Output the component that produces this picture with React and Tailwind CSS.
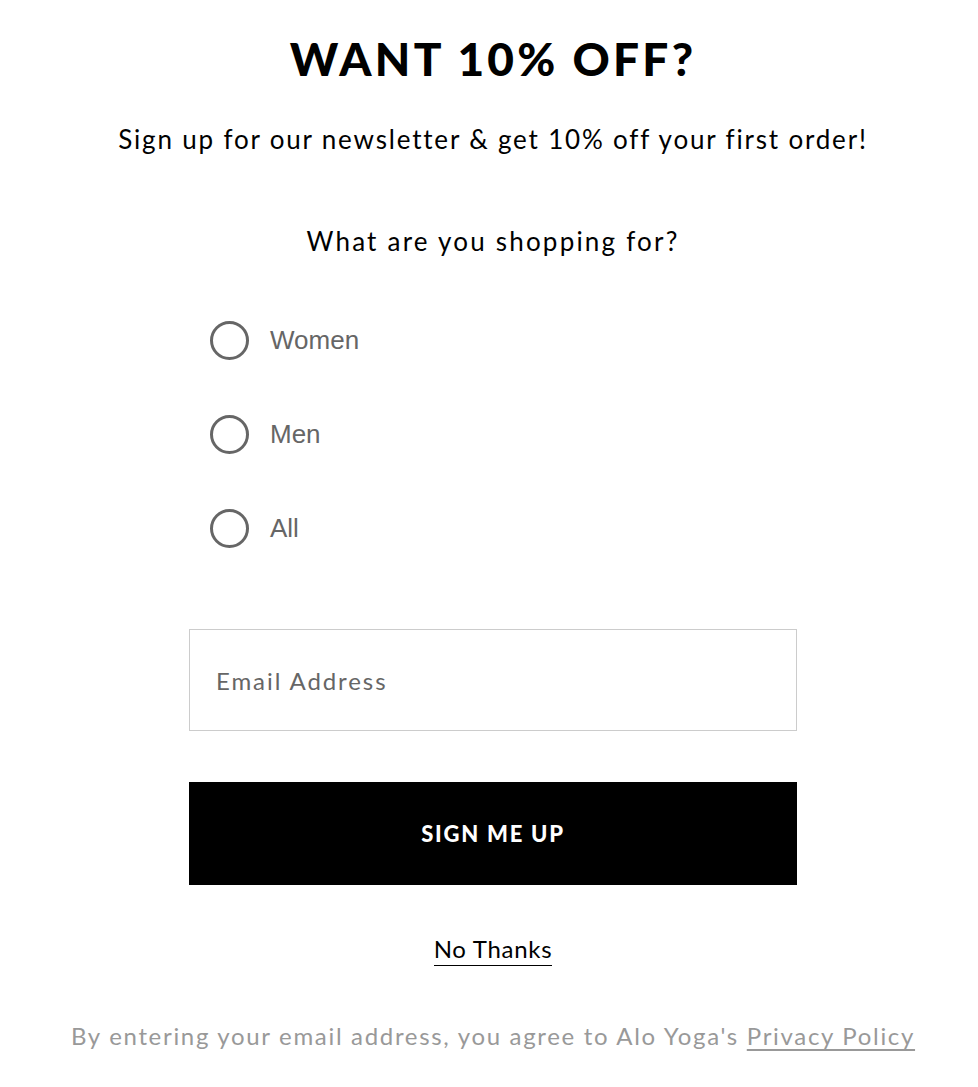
import { useState } from "react";

const options = ["Women", "Men", "All"];

const App = () => {
  const [choice, setChoice] = useState(null);
  const [email, setEmail] = useState("");

  return (
    <div className="min-h-screen w-full bg-white flex flex-col items-center pl-[8px] font-['Lato',sans-serif] text-black">
      <h1 className="mt-[34px] text-[46px] leading-[50px] font-black tracking-[0.07em] font-['Lato',sans-serif]">
        WANT 10% OFF?
      </h1>
      <p className="mt-[40px] text-[26px] leading-[30px] tracking-[0.07em]">
        Sign up for our newsletter &amp; get 10% off your first order!
      </p>
      <p className="mt-[72px] text-[26px] leading-[30px] tracking-[0.085em]">
        What are you shopping for?
      </p>

      <div className="mt-[65px] w-[608px] flex flex-col gap-[56px] pl-[21px]">
        {options.map((opt) => (
          <label
            key={opt}
            className="flex items-center gap-[21px] h-[38px] cursor-pointer"
            onClick={() => setChoice(opt)}
          >
            <span className="w-[39px] h-[39px] rounded-full border-[3px] border-[#666] flex items-center justify-center">
              {choice === opt && (
                <span className="w-[21px] h-[21px] rounded-full bg-[#666]" />
              )}
            </span>
            <span className="text-[26px] text-[#666] font-['Liberation_Sans',sans-serif]">
              {opt}
            </span>
          </label>
        ))}
      </div>

      <input
        type="email"
        value={email}
        onChange={(e) => setEmail(e.target.value)}
        placeholder="Email Address"
        className="mt-[82px] w-[608px] h-[102px] border border-[#ccc] px-[26px] text-[24px] tracking-[0.08em] text-[#333] placeholder:text-[#666] outline-none"
      />

      <button className="mt-[51px] w-[608px] h-[103px] bg-black text-white text-[22px] font-black tracking-[0.08em]">
        SIGN ME UP
      </button>

      <a
        href="#"
        className="mt-[50px] text-[24px] leading-[28px] pb-[2px] border-b border-black tracking-[0.03em]"
      >
        No Thanks
      </a>

      <p className="mt-[56px] text-[24px] leading-[28px] text-[#999] tracking-[0.07em]">
        By entering your email address, you agree to Alo Yoga's{" "}
        <a href="#" className="underline underline-offset-4">
          Privacy Policy
        </a>
      </p>
    </div>
  );
};

export default App;
